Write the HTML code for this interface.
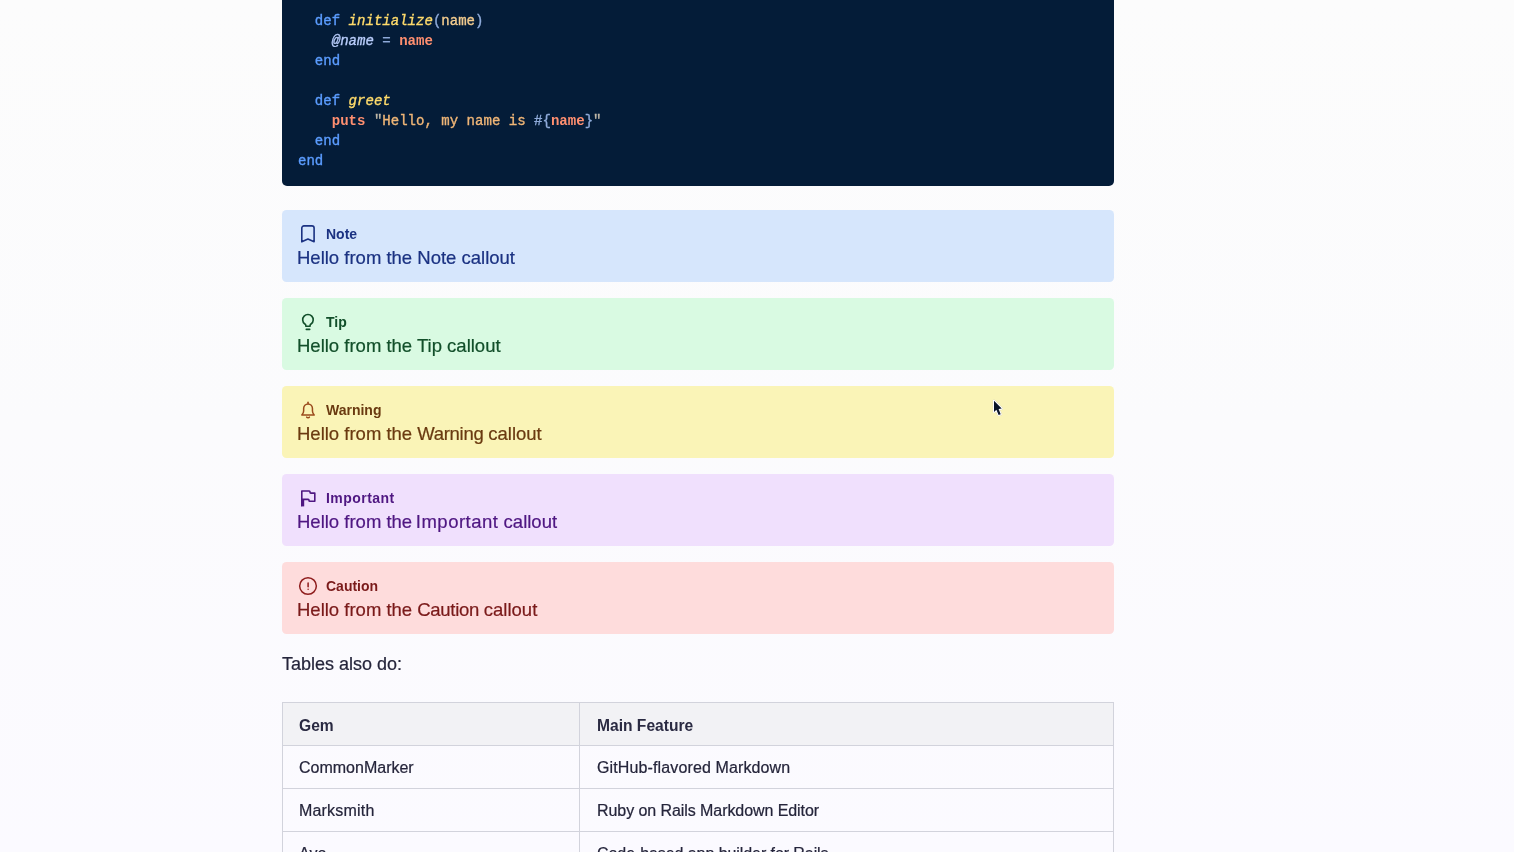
<!DOCTYPE html>
<html lang="en">
<head>
<meta charset="utf-8">
<title>Marksmith</title>
<style>
  * { box-sizing: border-box; }
  html, body { margin: 0; padding: 0; }
  body {
    width: 1514px; height: 852px; overflow: hidden; position: relative;
    background: linear-gradient(180deg, #fcfcfc 0%, #fbfbfd 50%, #fbfaff 100%);
    font-family: "Liberation Sans", sans-serif;
    color: #25253b;
  }
  .abs { position: absolute; }
  .t, .b, .para, .cell, pre { will-change: transform; }
  .b, .para, .cell { -webkit-text-stroke: 0.22px currentColor; }
  .row.h .cell { -webkit-text-stroke: 0; }
  /* code block */
  .code {
    left: 282px; top: -20px; width: 832px; height: 206px;
    background: #041c38; border-radius: 5px;
  }
  .code pre {
    margin: 0; position: absolute; left: 16.4px; top: 11px;
    font-family: "Liberation Mono", monospace; font-size: 14.05px; line-height: 20px;
    color: #e8b57c; white-space: pre;
    -webkit-text-stroke: 0.35px currentColor;
  }
  .k { color: #5c9dff; }
  .f { color: #ffdb6b; font-style: italic; }
  .p { color: #8fabda; }
  .a { color: #f5cd8f; }
  .i { color: #b8ccfa; font-style: italic; }
  .n { color: #ff8f70; font-weight: bold; -webkit-text-stroke: 0; }
  .s { color: #f0b677; }
  .q { color: #c2b9a8; }
  /* callouts */
  .callout { left: 282px; width: 832px; height: 72px; border-radius: 4.5px; }
  .callout svg { position: absolute; left: 16px; top: 14px; width: 20px; height: 20px; overflow: visible; }
  .callout .t { position: absolute; left: 43.7px; top: 15px; font-size: 14px; line-height: 18px; font-weight: bold; white-space: nowrap; }
  .callout .b { position: absolute; left: 15px; top: 35px; font-size: 18.5px; line-height: 26px; white-space: nowrap; }
  .note { top: 210px; background: #d6e6fc; color: #1b3282; }
  .tip { top: 298px; background: #d9fae2; color: #124f2a; }
  .warn { top: 386px; background: #faf4b7; color: #6a3a10; }
  .imp { top: 474px; background: #f0e0fd; color: #4f1782; }
  .caut { top: 562px; background: #fedcdc; color: #7a1a1a; }
  /* paragraph */
  .para { left: 281.5px; top: 651px; font-size: 18px; line-height: 26px; color: #25253b; white-space: nowrap; }
  /* table */
  .table { left: 282px; top: 702px; width: 832px; height: 160px; border: 1px solid #d2d3dc; border-bottom: 0; }
  .row { position: absolute; left: 0; width: 830px; height: 43px; border-bottom: 1px solid #d2d3dc; }
  .row.h { background: #f2f2f5; font-weight: bold; }
  .cell { position: absolute; top: 1px; height: 42px; font-size: 16px; line-height: 42px; white-space: nowrap; color: #25253b; }
  .row.h .cell { top: 1.5px; font-size: 15.6px; color: #2a2a42; }
  .c1 { left: 15.5px; }
  .c2 { left: 314px; }
  .vline { position: absolute; left: 296px; top: 0; width: 1px; height: 160px; background: #d2d3dc; }
</style>
</head>
<body>

<div class="abs code">
<pre>

  <span class="k">def</span> <span class="f">initialize</span><span class="p">(</span><span class="a">name</span><span class="p">)</span>
    <span class="i">@name</span> <span class="p">=</span> <span class="n">name</span>
  <span class="k">end</span>

  <span class="k">def</span> <span class="f">greet</span>
    <span class="n">puts</span> <span class="q">"</span><span class="s">Hello, my name is </span><span class="p">#{</span><span class="n">name</span><span class="p">}</span><span class="q">"</span>
  <span class="k">end</span>
<span class="k">end</span></pre>
</div>

<div class="abs callout note">
  <svg viewBox="0 0 20 20" fill="none" stroke="currentColor" stroke-width="1.6" stroke-linecap="round" stroke-linejoin="round"><path d="M3.8 4.1a2.2 2.2 0 0 1 2.2-2.2h7.900a2.2 2.2 0 0 1 2.2 2.2v13.700l-6.150-2.700-6.150 2.700z"/></svg>
  <div class="t">Note</div>
  <div class="b">Hello from the Note callout</div>
</div>

<div class="abs callout tip">
  <svg viewBox="0 0 20 20" fill="none" stroke="currentColor" stroke-width="1.6" stroke-linecap="round" stroke-linejoin="round"><path d="M7.800 14.300v-1.100c0-.6-.5-1-1.200-1.400a5.250 5.250 0 1 1 6.700 0c-.7.400-1.200.8-1.200 1.400v1.100z"/><path d="M8.300 17.400h3.400"/></svg>
  <div class="t">Tip</div>
  <div class="b">Hello from the Tip callout</div>
</div>

<div class="abs callout warn">
  <svg viewBox="0 0 20 20" fill="none" stroke="#9a4a1c" stroke-width="1.5" stroke-linecap="round" stroke-linejoin="round"><path d="M10.050 2.300v1.300"/><path d="M5.650 8.600a4.400 4.700 0 0 1 8.800 0v2.400c0 1.600.6 2.900 1.750 4h-12.400c1.150-1.100 1.850-2.400 1.850-4z"/><path d="M8.700 17.100a1.500 1.300 0 0 0 2.700 0"/></svg>
  <div class="t">Warning</div>
  <div class="b">Hello from the <span style="letter-spacing:-.3px">Warning </span>callout</div>
</div>

<div class="abs callout imp">
  <svg viewBox="0 0 20 20" fill="none" stroke="currentColor" stroke-width="1.6" stroke-linecap="round" stroke-linejoin="round"><path d="M3.800 17.600v-14.600h7.400c.5 0 .8.300.8.800v.5c0 .5.300.8.800.8h4v8.200h-5c-.5 0-.8-.3-.8-.8v-.3c0-.5-.3-.8-.8-.8h-6.400"/><path d="M4.650 11.800v6.600" stroke-width="3.100" stroke-linecap="butt"/></svg>
  <div class="t" style="letter-spacing:.45px">Important</div>
  <div class="b">Hello from the <span style="letter-spacing:.5px;margin-left:-1.5px">Important</span> callout</div>
</div>

<div class="abs callout caut">
  <svg viewBox="0 0 20 20" fill="none" stroke="#8f1d1d" stroke-width="1.5" stroke-linecap="round" stroke-linejoin="round"><circle cx="10" cy="10" r="8.350"/><path d="M10.100 6.900v3.900"/><path d="M10.100 13.250v.05"/></svg>
  <div class="t">Caution</div>
  <div class="b">Hello from the <span style="letter-spacing:-.3px">Caution </span>callout</div>
</div>

<div class="abs para">Tables also do:</div>

<div class="abs table">
  <div class="row h" style="top:0"><div class="cell c1">Gem</div><div class="cell c2">Main Feature</div></div>
  <div class="row" style="top:43px"><div class="cell c1">CommonMarker</div><div class="cell c2" style="letter-spacing:.125px">GitHub-flavored Markdown</div></div>
  <div class="row" style="top:86px"><div class="cell c1" style="letter-spacing:.19px">Marksmith</div><div class="cell c2" style="letter-spacing:-.07px">Ruby on Rails Markdown Editor</div></div>
  <div class="row" style="top:129px"><div class="cell c1">Avo</div><div class="cell c2" style="letter-spacing:-.075px">Code-based app builder for Rails</div></div>
  <div class="vline"></div>
</div>

<svg class="abs" style="left:990px;top:396px;width:20px;height:24px;overflow:visible;filter:drop-shadow(0 .6px .6px rgba(120,100,20,.45))" viewBox="0 0 20 24"><path d="M4 4.800V15.900L6.400 13.700L8.600 18.900L10.700 18.300L8.600 13.100L11.700 12.600Z" fill="#0b1628" stroke="#ffffff" stroke-width="2.300" stroke-linejoin="round" style="paint-order:stroke"/></svg>

</body>
</html>
